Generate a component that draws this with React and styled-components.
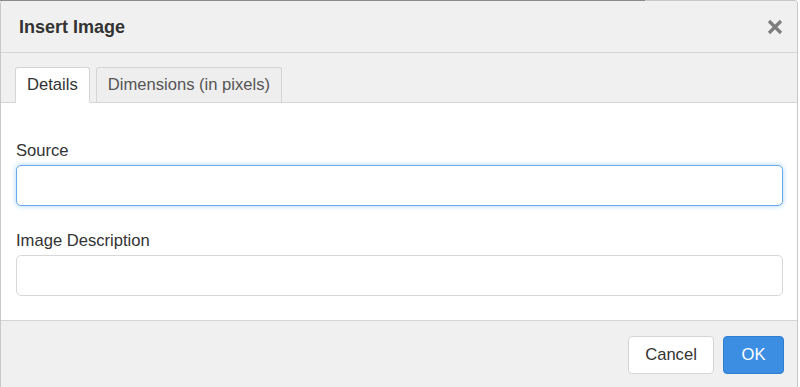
import React from "react";
import styled, { createGlobalStyle } from "styled-components";

const Global = createGlobalStyle`
	html, body {
		margin: 0;
		padding: 0;
		background: #ffffff;
	}
	body {
		font-family: "Liberation Sans", Arial, sans-serif;
		color: #333333;
	}
`;

const Page = styled.div`
	width: 800px;
	height: 387px;
	position: relative;
	overflow: hidden;
	background: #ffffff;
`;

const TopShade = styled.div`
	position: absolute;
	top: 0;
	left: 0;
	width: 645px;
	height: 1px;
	background: #8a8a8a;
	z-index: 2;
`;

const Dialog = styled.div`
	box-sizing: border-box;
	width: 798px;
	height: 387px;
	border: 1px solid #c8c8c8;
	border-bottom: none;
	border-radius: 4px 4px 0 0;
	display: flex;
	flex-direction: column;
	background: #ffffff;
	overflow: hidden;
`;

const Header = styled.div`
	height: 51px;
	flex: none;
	display: flex;
	align-items: center;
	justify-content: space-between;
	padding: 0 13px 0 18px;
	background: #f0f0f0;
	border-bottom: 1px solid #d5d5d5;
`;

const Title = styled.h1`
	margin: 0;
	font-size: 18px;
	font-weight: bold;
	color: #333333;
	padding-top: 2px;
`;

const Close = styled.button`
	border: none;
	background: none;
	padding: 0;
	width: 18px;
	height: 18px;
	display: flex;
	align-items: center;
	justify-content: center;
	cursor: pointer;
`;

const TabBar = styled.div`
	height: 50px;
	flex: none;
	box-sizing: border-box;
	display: flex;
	align-items: flex-end;
	gap: 6px;
	padding: 0 0 0 14px;
	background: #f0f0f0;
	border-bottom: 1px solid #d5d5d5;
`;

const Tab = styled.div`
	box-sizing: border-box;
	height: ${(p) => (p.$active ? "36px" : "35px")};
	margin-bottom: ${(p) => (p.$active ? "-1px" : "0")};
	padding: 0 11px;
	display: flex;
	align-items: center;
	font-size: 16.6px;
	color: ${(p) => (p.$active ? "#333333" : "#555555")};
	background: ${(p) => (p.$active ? "#ffffff" : "#eeeeee")};
	border: 1px solid #d5d5d5;
	border-bottom: ${(p) => (p.$active ? "1px solid #ffffff" : "none")};
	border-radius: 3px 3px 0 0;
`;

const Body = styled.div`
	flex: 1;
	min-height: 0;
	display: flex;
	flex-direction: column;
	gap: 25px;
	padding: 38px 14px 0 15px;
	background: #ffffff;
`;

const Field = styled.div`
	display: flex;
	flex-direction: column;
	gap: 4px;
`;

const Label = styled.label`
	font-size: 16.6px;
	color: #333333;
	line-height: 20px;
`;

const Input = styled.input`
	box-sizing: border-box;
	height: 41px;
	width: 100%;
	border: 1px solid ${(p) => (p.$focused ? "#67a9ec" : "#d8d8d8")};
	border-radius: 5px;
	box-shadow: ${(p) =>
		p.$focused ? "0 0 4px 1px rgba(82, 168, 236, 0.35)" : "none"};
	font: inherit;
	padding: 0 8px;
	outline: none;
	background: #ffffff;
`;

const Footer = styled.div`
	height: 67px;
	flex: none;
	box-sizing: border-box;
	display: flex;
	align-items: center;
	justify-content: flex-end;
	gap: 9px;
	padding: 1px 13px 0 0;
	background: #f0f0f0;
	border-top: 1px solid #d5d5d5;
`;

const Button = styled.button`
	box-sizing: border-box;
	height: 38px;
	padding: 0 ${(p) => (p.$primary ? "17px" : "16px")};
	font-family: "Liberation Sans", Arial, sans-serif;
	font-size: 16.6px;
	border-radius: 4px;
	border: 1px solid ${(p) => (p.$primary ? "#2f7fd0" : "#d5d5d5")};
	background: ${(p) => (p.$primary ? "#3c8ee2" : "#ffffff")};
	color: ${(p) => (p.$primary ? "#ffffff" : "#333333")};
	cursor: pointer;
	min-width: ${(p) => (p.$primary ? "61px" : "86px")};
`;

const CloseIcon = () => (
	<svg width="16" height="16" viewBox="0 0 16 16">
		<path d="M2 2 L14 14 M14 2 L2 14" stroke="#7d7d7d" strokeWidth="3.2" strokeLinecap="butt" />
	</svg>
);

const App = () => (
	<React.Fragment>
		<Global />
		<Page>
			<TopShade />
			<Dialog>
				<Header>
					<Title>Insert Image</Title>
					<Close aria-label="Close">
						<CloseIcon />
					</Close>
				</Header>
				<TabBar>
					<Tab $active>Details</Tab>
					<Tab>Dimensions (in pixels)</Tab>
				</TabBar>
				<Body>
					<Field>
						<Label>Source</Label>
						<Input $focused />
					</Field>
					<Field>
						<Label>Image Description</Label>
						<Input />
					</Field>
				</Body>
				<Footer>
					<Button>Cancel</Button>
					<Button $primary>OK</Button>
				</Footer>
			</Dialog>
		</Page>
	</React.Fragment>
);

export default App;
